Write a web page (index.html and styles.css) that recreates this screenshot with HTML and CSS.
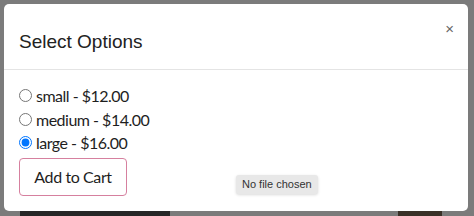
FILE: index.html
```html
<!DOCTYPE html>
<html lang="en">
<head>
    <meta charset="UTF-8">
    <meta name="viewport" content="width=device-width, initial-scale=1.0">
    <title>Select Options</title>
    <link rel="stylesheet" href="styles.css">
</head>
<body>
    <div class="modal">
        <div class="modal-header">
            <h2 class="modal-title">Select Options</h2>
            <button class="close" type="button">&times;</button>
        </div>
        <form class="modal-body">
            <label class="option"><input type="radio" name="size" value="small"> small - $12.00</label>
            <label class="option"><input type="radio" name="size" value="medium"> medium - $14.00</label>
            <label class="option"><input type="radio" name="size" value="large" checked> large - $16.00</label>
            <button class="add-to-cart" type="button">Add to Cart</button>
        </form>
        <div class="file-tooltip">No file chosen</div>
    </div>
    <div class="page-peek">
        <div class="peek-dark"></div>
        <div class="peek-gap"></div>
        <div class="peek-photo"></div>
    </div>
</body>
</html>
```

FILE: styles.css
```css
body {
    margin: 0;
    padding: 4px 6px 0 4px;
    background-color: #7b7b7b;
    font-family: Lato, 'Noto Sans', sans-serif;
    color: #222;
    height: 216px;
    box-sizing: border-box;
    overflow: hidden;
}
.modal {
    position: relative;
    width: 464px;
    height: 207px;
    background-color: #fff;
    border-radius: 5px;
    box-sizing: border-box;
}
.modal-header {
    display: flex;
    justify-content: space-between;
    align-items: flex-start;
    padding: 26px 15px 15px 15px;
    border-bottom: 1px solid #e4e4e4;
}
.modal-title {
    margin: 0;
    font-family: 'Liberation Sans', Arial, sans-serif;
    font-weight: 400;
    font-size: 19px;
    line-height: 24px;
    color: #222;
}
.close {
    background: none;
    border: none;
    padding: 0;
    margin-top: -9px;
    margin-right: -1px;
    font-family: 'Liberation Sans', Arial, sans-serif;
    font-size: 15px;
    line-height: 16px;
    color: #666;
    cursor: pointer;
}
.modal-body {
    display: flex;
    flex-direction: column;
    align-items: flex-start;
    padding: 14px 15px 15px 15px;
}
.option {
    display: flex;
    align-items: center;
    font-size: 16px;
    line-height: 23.5px;
    letter-spacing: -0.5px;
    color: #1e1e1e;
}
.option input {
    margin: 0 4px 0 0;
    width: 13px;
    height: 13px;
}
.add-to-cart {
    margin-top: 3px;
    width: 108px;
    height: 38px;
    background-color: #fff;
    border: 1px solid #d6809f;
    border-radius: 4px;
    font-family: Lato, 'Noto Sans', sans-serif;
    font-size: 16px;
    letter-spacing: -0.4px;
    color: #1e1e1e;
    cursor: pointer;
}
.file-tooltip {
    position: absolute;
    left: 232px;
    top: 171px;
    padding: 2px 6px;
    background-color: #e8e8e8;
    border-radius: 3px;
    box-shadow: 0 1px 3px rgba(0,0,0,0.15);
    font-family: 'Liberation Sans', Arial, sans-serif;
    font-size: 11px;
    line-height: 15px;
    color: #333;
}
.page-peek {
    display: flex;
    height: 5px;
}
.peek-dark {
    width: 150px;
    margin-left: 16px;
    background-color: #262626;
}
.peek-gap {
    flex: 1;
}
.peek-photo {
    width: 44px;
    margin-right: 26px;
    background-color: #3a3027;
}
```
